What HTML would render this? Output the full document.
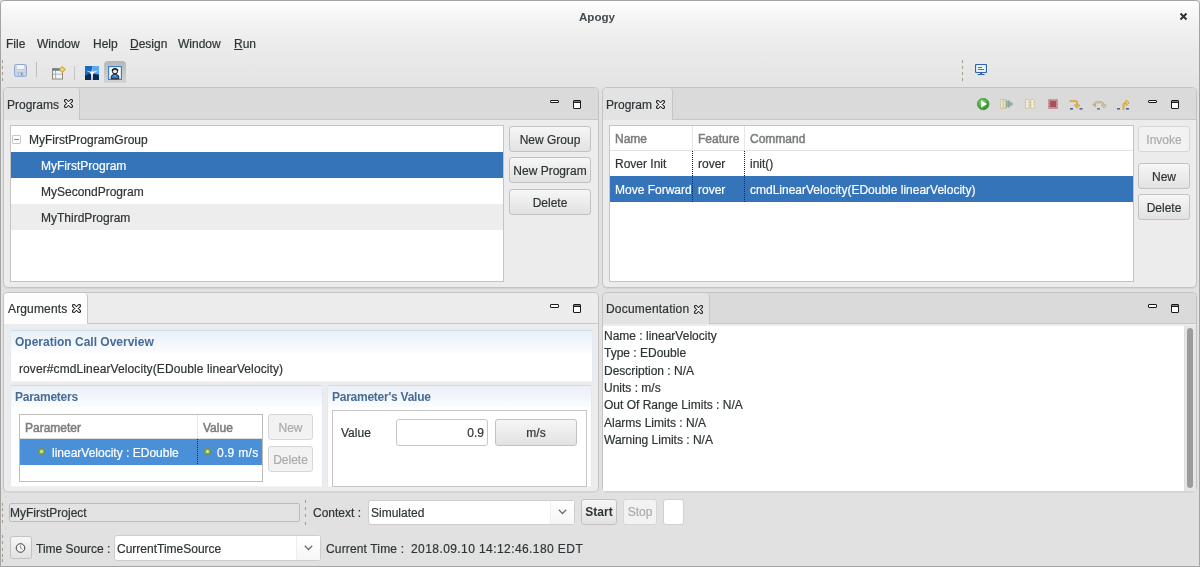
<!DOCTYPE html>
<html><head><meta charset="utf-8">
<style>
*{box-sizing:border-box;margin:0;padding:0}
html,body{width:1200px;height:567px;overflow:hidden;background:#e1e1e1}
body{-webkit-font-smoothing:antialiased;position:relative;font-family:"Liberation Sans",sans-serif;font-size:12px;color:#2e3436}
.a{position:absolute}
.t{position:absolute;white-space:pre;line-height:14px;font-size:12px;will-change:transform;-webkit-text-stroke:0.2px currentColor}
.b{font-weight:bold;-webkit-text-stroke:0}
.win{left:0;top:0;width:1200px;height:567px;border:1px solid #a4a4a4;border-radius:4px 4px 0 0;background:#e1e1e1}
.title{left:1px;top:1px;width:1198px;height:87px;background:linear-gradient(#fefefe 0,#f3f3f3 20px,#ebebeb 45px,#e4e4e4 86px);border-radius:4px 4px 0 0}
.panel{position:absolute;border:1px solid #c3c3c3;border-radius:5px;background:#ececec;overflow:hidden;box-shadow:0 1px 0 rgba(0,0,0,0.05)}
.strip{position:absolute;left:0;top:0;right:0;height:32px;background:#dadada;border-bottom:1px solid #c6c6c6}
.tab{position:absolute;left:0;top:0;height:32px;background:#e3e3e3;border-right:1px solid #c6c6c6;border-radius:4px 4px 0 0}
.tab.act{background:#fdfdfd}
.strip.act{background:#ececec}
.btn{position:absolute;border:1px solid #c2c2c2;border-radius:3px;background:linear-gradient(#f6f6f6,#e2e2e2);text-align:center;line-height:24px;padding-top:1px;color:#2e3436;will-change:transform;-webkit-text-stroke:0.2px currentColor;white-space:pre}
.btn.dis{background:#f2f2f2;border-color:#d6d6d6;color:#a9acac}
.box{position:absolute;background:#fff;border:1px solid #c4c4c4}
.sel{position:absolute;background:#3574b9}
.sel2{position:absolute;background:#4a90d9}
.w{color:#fff}
.hdr{color:#7b7e7e;-webkit-text-stroke:0.5px currentColor}
.sec{position:absolute;border:1px solid #e2e9f2;border-top-color:#cddbeb;border-bottom-color:#f0f3f7;background:#fff}
.sech{position:absolute;left:0;top:0;right:0;height:21px;background:linear-gradient(#eaf0f8,#fbfcfe)}
.blue{color:#456b97;font-weight:bold;-webkit-text-stroke:0}
</style></head><body>
<div class="a win"></div>
<div class="a title"></div>
<div class="t b" style="left:579px;top:10px;color:#444c4f;font-size:11.6px">Apogy</div>
<svg class="a" style="left:1179px;top:12px" width="9" height="9" viewBox="0 0 9 9"><path d="M1.5 1.5L7.5 7.5M7.5 1.5L1.5 7.5" stroke="#2e3436" stroke-width="2"/></svg>

<!-- menu -->
<div class="t" style="left:6px;top:37px">File</div>
<div class="t" style="left:37px;top:37px">Window</div>
<div class="t" style="left:93px;top:37px">Help</div>
<div class="t" style="left:130px;top:37px"><u>D</u>esign</div>
<div class="t" style="left:178px;top:37px">Window</div>
<div class="t" style="left:234px;top:37px"><u>R</u>un</div>

<!-- Programs panel -->
<div class="panel" style="left:3px;top:87px;width:596px;height:201px">
  <div class="strip"></div>
  <div class="tab" style="width:76px"></div>
</div>
<div class="t" style="left:7px;top:98px">Programs</div>

<!-- Program panel -->
<div class="panel" style="left:602px;top:87px;width:595px;height:201px">
  <div class="strip"></div>
  <div class="tab" style="width:70px"></div>
</div>
<div class="t" style="left:606px;top:98px">Program</div>

<!-- Arguments panel -->
<div class="panel" style="left:3px;top:292px;width:596px;height:200px;border-bottom-color:#d4d4d4">
  <div class="strip act" style="height:31px"></div>
  <div class="tab act" style="width:84px;height:31px"></div>
</div>
<div class="t" style="left:8px;top:302px;letter-spacing:0.15px">Arguments</div>

<!-- Documentation panel -->
<div class="panel" style="left:602px;top:292px;width:595px;height:200px;border-bottom-color:#d4d4d4">
  <div class="strip" style="height:31px"></div>
  <div class="tab" style="width:107px;height:31px"></div>
</div>
<div class="t" style="left:606px;top:302px;letter-spacing:0.2px">Documentation</div>

<!-- Programs content -->
<div class="box" style="left:10px;top:125px;width:494px;height:157px"></div>
<div class="a" style="left:11px;top:152px;width:492px;height:26px;background:#3574b9"></div>
<div class="a" style="left:11px;top:204px;width:492px;height:26px;background:#ededed"></div>
<div class="a" style="left:12px;top:135px;width:9px;height:9px;border:1px solid #c8c8c8;border-radius:1px"></div>
<div class="a" style="left:14px;top:139px;width:5px;height:1px;background:#8a8a8a"></div>
<div class="t" style="left:29px;top:133px">MyFirstProgramGroup</div>
<div class="t w" style="left:41px;top:159px">MyFirstProgram</div>
<div class="t" style="left:41px;top:185px">MySecondProgram</div>
<div class="t" style="left:41px;top:211px">MyThirdProgram</div>
<div class="btn" style="left:509px;top:126px;width:82px;height:26px">New Group</div>
<div class="btn" style="left:509px;top:157px;width:82px;height:26px">New Program</div>
<div class="btn" style="left:509px;top:189px;width:82px;height:26px">Delete</div>

<!-- Program content -->
<div class="box" style="left:609px;top:125px;width:525px;height:157px"></div>
<div class="a" style="left:610px;top:150px;width:523px;height:1px;background:#e2e2e2"></div>
<div class="a" style="left:692px;top:126px;width:1px;height:24px;background:#e6e6e6"></div>
<div class="a" style="left:744px;top:126px;width:1px;height:24px;background:#e6e6e6"></div>
<div class="a" style="left:610px;top:176px;width:523px;height:26px;background:#3574b9"></div>
<div class="a" style="left:692px;top:151px;width:1px;height:51px;background:repeating-linear-gradient(#222 0 1px,transparent 1px 2px)"></div>
<div class="a" style="left:744px;top:151px;width:1px;height:51px;background:repeating-linear-gradient(#222 0 1px,transparent 1px 2px)"></div>
<div class="t hdr" style="left:615px;top:132px">Name</div>
<div class="t hdr" style="left:698px;top:132px">Feature</div>
<div class="t hdr" style="left:750px;top:132px">Command</div>
<div class="t" style="left:615px;top:157px">Rover Init</div>
<div class="t" style="left:698px;top:157px">rover</div>
<div class="t" style="left:750px;top:157px">init()</div>
<div class="t w" style="left:615px;top:183px">Move Forward</div>
<div class="t w" style="left:698px;top:183px">rover</div>
<div class="t w" style="left:750px;top:183px">cmdLinearVelocity(EDouble linearVelocity)</div>
<div class="btn dis" style="left:1138px;top:126px;width:52px;height:26px">Invoke</div>
<div class="btn" style="left:1138px;top:163px;width:52px;height:26px">New</div>
<div class="btn" style="left:1138px;top:194px;width:52px;height:26px">Delete</div>

<!-- Arguments content -->
<div class="sec" style="left:10px;top:330px;width:583px;height:52px;border-radius:2px"><div class="sech" style="height:22px"></div></div>
<div class="t blue" style="left:15px;top:335px">Operation Call Overview</div>
<div class="t" style="left:19px;top:362px;letter-spacing:0.1px">rover#cmdLinearVelocity(EDouble linearVelocity)</div>
<div class="sec" style="left:10px;top:385px;width:313px;height:102px;border-radius:2px"><div class="sech"></div></div>
<div class="t blue" style="left:15px;top:390px;letter-spacing:-0.25px">Parameters</div>
<div class="sec" style="left:327px;top:385px;width:265px;height:102px;border-radius:2px"><div class="sech"></div></div>
<div class="t blue" style="left:332px;top:390px;letter-spacing:-0.25px">Parameter's Value</div>
<div class="box" style="left:19px;top:414px;width:244px;height:68px;border-color:#bdbdbd"></div>
<div class="a" style="left:20px;top:438px;width:242px;height:1px;background:#dedede"></div>
<div class="a" style="left:197px;top:415px;width:1px;height:23px;background:#e6e6e6"></div>
<div class="a" style="left:20px;top:439px;width:242px;height:26px;background:#4a90d9"></div>
<div class="a" style="left:197px;top:439px;width:1px;height:26px;background:repeating-linear-gradient(#222 0 1px,transparent 1px 2px)"></div>
<div class="t hdr" style="left:25px;top:421px">Parameter</div>
<div class="t hdr" style="left:203px;top:421px">Value</div>
<div class="t w" style="left:52px;top:446px">linearVelocity : EDouble</div>
<div class="t w" style="left:217px;top:446px;letter-spacing:0.3px">0.9 m/s</div>
<div class="btn dis" style="left:268px;top:414px;width:45px;height:26px">New</div>
<div class="btn dis" style="left:268px;top:446px;width:45px;height:26px">Delete</div>
<div class="box" style="left:332px;top:410px;width:255px;height:77px;border-color:#c6c6c6"></div>
<div class="t" style="left:341px;top:426px">Value</div>
<div class="a" style="left:396px;top:419px;width:92px;height:27px;background:#fff;border:1px solid #c6c6c6;border-radius:3px"></div>
<div class="t" style="left:396px;top:426px;width:88px;text-align:right">0.9</div>
<div class="btn" style="left:495px;top:419px;width:82px;height:27px;line-height:25px">m/s</div>

<!-- Documentation content -->
<div class="a" style="left:603px;top:326px;width:593px;height:165px;background:#fff"></div>
<div class="a" style="left:1184px;top:326px;width:12px;height:165px;background:#e6e6e6;border-left:1px solid #dedede"></div>
<div class="a" style="left:1187px;top:328px;width:6px;height:160px;background:#9b9b9b;border-radius:3px"></div>
<div class="t" style="left:604px;top:328px;line-height:17.35px">Name : linearVelocity
Type : EDouble
Description : N/A
Units : m/s
Out Of Range Limits : N/A
Alarms Limits : N/A
Warning Limits : N/A</div>

<!-- status bar -->
<div class="a" style="left:9px;top:503px;width:291px;height:19px;background:#e3e3e3;border:1px solid #bcbcbc;border-radius:2px"></div>
<div class="t" style="left:10px;top:506px">MyFirstProject</div>
<div class="t" style="left:313px;top:506px">Context :</div>
<div class="a" style="left:368px;top:500px;width:207px;height:25px;background:#fff;border:1px solid #cdcdcd;border-radius:3px"></div>
<div class="a" style="left:550px;top:501px;width:24px;height:23px;background:linear-gradient(#fff,#f6f6f6);border-left:1px solid #eeeeee"></div>
<div class="t" style="left:371px;top:506px">Simulated</div>
<div class="btn" style="left:581px;top:499px;width:36px;height:26px;line-height:23px;font-weight:bold;-webkit-text-stroke:0">Start</div>
<div class="btn dis" style="left:623px;top:499px;width:34px;height:26px;line-height:23px">Stop</div>
<div class="a" style="left:663px;top:499px;width:21px;height:26px;background:#fff;border:1px solid #d0d0d0;border-radius:3px"></div>
<div class="btn" style="left:10px;top:536px;width:22px;height:23px"></div>
<div class="t" style="left:36px;top:542px">Time Source :</div>
<div class="a" style="left:114px;top:535px;width:207px;height:26px;background:#fff;border:1px solid #cdcdcd;border-radius:3px"></div>
<div class="a" style="left:296px;top:536px;width:24px;height:24px;background:linear-gradient(#fff,#f6f6f6);border-left:1px solid #eeeeee"></div>
<div class="t" style="left:117px;top:542px">CurrentTimeSource</div>
<div class="t" style="left:326px;top:542px;letter-spacing:0.15px">Current Time :</div>
<div class="t" style="left:411px;top:542px;letter-spacing:0.42px">2018.09.10 14:12:46.180 EDT</div>

<!-- icons -->
<div class="a" style="left:2px;top:60px;width:1px;height:3px;background:#a59d88"></div><div class="a" style="left:2px;top:66px;width:1px;height:3px;background:#a59d88"></div><div class="a" style="left:2px;top:72px;width:1px;height:3px;background:#a59d88"></div><div class="a" style="left:2px;top:78px;width:1px;height:3px;background:#a59d88"></div><div class="a" style="left:962px;top:60px;width:1px;height:3px;background:#a59d88"></div><div class="a" style="left:962px;top:66px;width:1px;height:3px;background:#a59d88"></div><div class="a" style="left:962px;top:72px;width:1px;height:3px;background:#a59d88"></div><div class="a" style="left:962px;top:78px;width:1px;height:3px;background:#a59d88"></div><div class="a" style="left:2px;top:503px;width:1px;height:3px;background:#a59d88"></div><div class="a" style="left:2px;top:508px;width:1px;height:3px;background:#a59d88"></div><div class="a" style="left:2px;top:514px;width:1px;height:3px;background:#a59d88"></div><div class="a" style="left:2px;top:520px;width:1px;height:3px;background:#a59d88"></div><div class="a" style="left:2px;top:535px;width:1px;height:3px;background:#a59d88"></div><div class="a" style="left:2px;top:541px;width:1px;height:3px;background:#a59d88"></div><div class="a" style="left:2px;top:548px;width:1px;height:3px;background:#a59d88"></div><div class="a" style="left:2px;top:554px;width:1px;height:3px;background:#a59d88"></div><div class="a" style="left:2px;top:559px;width:1px;height:3px;background:#a59d88"></div><div class="a" style="left:305px;top:500px;width:1px;height:3px;background:#a59d88"></div><div class="a" style="left:305px;top:507px;width:1px;height:3px;background:#a59d88"></div><div class="a" style="left:305px;top:514px;width:1px;height:3px;background:#a59d88"></div><div class="a" style="left:305px;top:522px;width:1px;height:3px;background:#a59d88"></div>
<svg class="a" style="left:64px;top:99px" width="9" height="9" viewBox="0 0 9 9"><path d="M1.7 1.7L7.3 7.3M7.3 1.7L1.7 7.3" stroke="#262626" stroke-width="3.6" stroke-linecap="round"/><path d="M1.9 1.9L7.1 7.1M7.1 1.9L1.9 7.1" stroke="#fff" stroke-width="1.5" stroke-linecap="round"/></svg><svg class="a" style="left:656px;top:100px" width="9" height="9" viewBox="0 0 9 9"><path d="M1.7 1.7L7.3 7.3M7.3 1.7L1.7 7.3" stroke="#262626" stroke-width="3.6" stroke-linecap="round"/><path d="M1.9 1.9L7.1 7.1M7.1 1.9L1.9 7.1" stroke="#fff" stroke-width="1.5" stroke-linecap="round"/></svg><svg class="a" style="left:72px;top:304px" width="9" height="9" viewBox="0 0 9 9"><path d="M1.7 1.7L7.3 7.3M7.3 1.7L1.7 7.3" stroke="#262626" stroke-width="3.6" stroke-linecap="round"/><path d="M1.9 1.9L7.1 7.1M7.1 1.9L1.9 7.1" stroke="#fff" stroke-width="1.5" stroke-linecap="round"/></svg><svg class="a" style="left:694px;top:305px" width="9" height="9" viewBox="0 0 9 9"><path d="M1.7 1.7L7.3 7.3M7.3 1.7L1.7 7.3" stroke="#262626" stroke-width="3.6" stroke-linecap="round"/><path d="M1.9 1.9L7.1 7.1M7.1 1.9L1.9 7.1" stroke="#fff" stroke-width="1.5" stroke-linecap="round"/></svg>
<div class="a" style="left:550px;top:100px;width:9px;height:3px;border:1px solid #1a1a1a;border-radius:1px;background:#fff"></div><div class="a" style="left:573px;top:100px;width:8px;height:9px;border:1px solid #1a1a1a;border-radius:1px;background:linear-gradient(#666 0,#999 1px,#222 1px,#222 2px,#fff 2px)"></div><div class="a" style="left:1148px;top:100px;width:9px;height:3px;border:1px solid #1a1a1a;border-radius:1px;background:#fff"></div><div class="a" style="left:1171px;top:100px;width:8px;height:9px;border:1px solid #1a1a1a;border-radius:1px;background:linear-gradient(#666 0,#999 1px,#222 1px,#222 2px,#fff 2px)"></div><div class="a" style="left:550px;top:304px;width:9px;height:4px;border:1px solid #1a1a1a;border-radius:1px;background:#fff"></div><div class="a" style="left:573px;top:304px;width:8px;height:9px;border:1px solid #1a1a1a;border-radius:1px;background:linear-gradient(#666 0,#999 1px,#222 1px,#222 2px,#fff 2px)"></div><div class="a" style="left:1148px;top:304px;width:9px;height:4px;border:1px solid #1a1a1a;border-radius:1px;background:#fff"></div><div class="a" style="left:1171px;top:304px;width:8px;height:9px;border:1px solid #1a1a1a;border-radius:1px;background:linear-gradient(#666 0,#999 1px,#222 1px,#222 2px,#fff 2px)"></div>

<svg class="a" style="left:14px;top:64px" width="13" height="13" viewBox="0 0 13 13">
<rect x="0.5" y="0.5" width="12" height="12" rx="1.8" fill="#c9d6ea" stroke="#8ea6cd"/>
<rect x="3" y="1" width="7" height="5.5" fill="#f2f5fa"/><rect x="3" y="5.2" width="7" height="1" fill="#d7b97a"/>
<rect x="3.5" y="8" width="6" height="4.5" fill="#a9bedb"/><rect x="5" y="9" width="1.5" height="2.5" fill="#e4e0c8"/><rect x="7" y="9" width="1" height="2.5" fill="#7f9a74"/>
</svg>
<div class="a" style="left:36px;top:62px;width:1px;height:15px;background:#bdbdbd"></div>
<div class="a" style="left:74px;top:66px;width:1px;height:14px;background:#c4c4c4"></div>
<svg class="a" style="left:52px;top:66px" width="14" height="14" viewBox="0 0 14 14">
<rect x="0.5" y="2.5" width="10" height="10.5" fill="#eef5fb" stroke="#8c8a74"/>
<rect x="1" y="3" width="9" height="1.8" fill="#4f82c6"/>
<path d="M1 8.2h9M3.5 5v7.5" stroke="#a9a58c" stroke-width="0.8"/>
<path d="M10.3 0.3l3.2 3.2-3.2 3.2-3.2-3.2z" fill="#e2bd55" stroke="#c59a35" stroke-width="0.7"/><path d="M10.3 2l1.3 1.5-1.3 1.3-1.2-1.3z" fill="#f6e6a8"/>
</svg>
<svg class="a" style="left:85px;top:66px" width="14" height="14" viewBox="0 0 14 14">
<rect width="14" height="14" fill="#1b6ac0"/><rect x="7" y="0" width="7" height="8" fill="#5eaaec"/>
<path d="M0 14V9.5L7 6.8 14 9.5V14z" fill="#072a58"/>
<path d="M7 7.6L0.8 4.4 7 6.0 13.2 4.4 7.9 7.6 7.7 14 6.3 14 6.1 7.6z" fill="#fff"/>
<path d="M7 2.5L7.6 7 7 8.5 6.4 7z" fill="#fff"/>
<circle cx="7" cy="7" r="1.6" fill="#fff"/>
</svg>
<div class="a" style="left:104px;top:61px;width:22px;height:22px;background:linear-gradient(#b4b8b4,#c8cac8 60%,#d4d4d4);border-radius:4px 4px 0 0"></div>
<svg class="a" style="left:108px;top:66px" width="14" height="14" viewBox="0 0 14 14">
<rect x="0.6" y="0.6" width="12.8" height="12.8" fill="#fff" stroke="#3a82cf" stroke-width="1.2"/>
<path d="M3.2 12.8V11c0-1.8 1.7-2.8 3.8-2.8s3.8 1 3.8 2.8v1.8z" fill="#2f78c8" stroke="#111" stroke-width="0.9"/>
<circle cx="7" cy="5.3" r="2.6" fill="#e6e6e6" stroke="#111" stroke-width="1"/>
<path d="M4.3 5C4.3 2.2 9.7 2.2 9.7 5" fill="none" stroke="#111" stroke-width="1.4"/>
<path d="M6.4 9.2h1.2L7 11.3z" fill="#cfe0f2"/>
</svg>
<svg class="a" style="left:975px;top:64px" width="12" height="11" viewBox="0 0 12 11">
<rect x="0.5" y="0.5" width="11" height="8" rx="1" fill="#e8f2fc" stroke="#2f63b0" stroke-width="1.2"/>
<path d="M3 3.5h4M3 5.5h6" stroke="#2f63b0" stroke-width="0.9"/>
<rect x="5" y="9" width="2" height="1" fill="#2f63b0"/><rect x="2.5" y="10" width="7" height="1" fill="#2f63b0"/>
</svg>
<svg class="a" style="left:977px;top:98px" width="13" height="13" viewBox="0 0 13 13">
<defs><radialGradient id="gp" cx="0.4" cy="0.35" r="0.7"><stop offset="0" stop-color="#8fd36f"/><stop offset="1" stop-color="#1f8a2a"/></radialGradient></defs>
<circle cx="6.2" cy="6" r="5.8" fill="url(#gp)" stroke="#2a8a30" stroke-width="0.6"/>
<path d="M4.2 2.2L10 6 4.2 9.8z" fill="#fff"/>
</svg>
<svg class="a" style="left:1000px;top:99px" width="14" height="10" viewBox="0 0 14 10">
<rect x="0.5" y="0.5" width="2.5" height="9" fill="#eee7cf" stroke="#c9b98c" stroke-dasharray="1 0.6"/>
<rect x="3.8" y="0.5" width="2.5" height="9" fill="#eee7cf" stroke="#c9b98c" stroke-dasharray="1 0.6"/>
<path d="M6 1l4 4-4 4zM8.5 1.5l4.5 3.5-4.5 3.5z" fill="#9fb6a6" stroke="#7f9d8a" stroke-width="0.6"/>
</svg>
<svg class="a" style="left:1025px;top:99px" width="10" height="10" viewBox="0 0 10 10">
<rect x="0.5" y="0.5" width="3.5" height="9" rx="0.8" fill="#f1ead4" stroke="#c6b587" stroke-dasharray="1 0.6"/>
<rect x="5.8" y="0.5" width="3.5" height="9" rx="0.8" fill="#f1ead4" stroke="#c6b587" stroke-dasharray="1 0.6"/>
</svg>
<svg class="a" style="left:1048px;top:99px" width="10" height="10" viewBox="0 0 10 10">
<rect x="0.5" y="0.5" width="9" height="9" fill="#c98a92" stroke="#c58a92" stroke-dasharray="1 0.5"/><rect x="2" y="2" width="6" height="6" fill="#a8505e"/>
</svg>
<svg class="a" style="left:1069px;top:99px" width="15" height="11" viewBox="0 0 15 11">
<path d="M1.5 2h4.5c1.5 0 2 1 2 2v2" fill="none" stroke="#dcae4c" stroke-width="2.2" stroke-linecap="round"/>
<path d="M5 6h6l-3 3.2z" fill="#e9be4f" stroke="#c9952e" stroke-width="0.6"/>
<rect x="1" y="9" width="3" height="1.6" fill="#4c6a94"/><rect x="10.5" y="9" width="3" height="1.6" fill="#4c6a94"/>
</svg>
<svg class="a" style="left:1092px;top:99px" width="15" height="11" viewBox="0 0 15 11">
<path d="M2 7C2 2 12 2 12 7" fill="none" stroke="#b9ad8c" stroke-width="2.4"/><path d="M2 7C2 2.8 12 2.8 12 7" fill="none" stroke="#e4dcc4" stroke-width="0.9"/>
<path d="M1 5.5h2.5v2.5zM9.5 6h5l-2.5 3z" fill="#d8cfb4" stroke="#b0a27e" stroke-width="0.7"/>
<rect x="5" y="9" width="3" height="1.6" fill="#6b7f99"/>
</svg>
<svg class="a" style="left:1116px;top:99px" width="15" height="11" viewBox="0 0 15 11">
<path d="M7.5 10V6.2c0-1.2.8-2.2 2-2.2h1" fill="none" stroke="#dcae4c" stroke-width="2.2" stroke-linecap="round"/>
<path d="M10 1l3.3 2.8L10 6.6z" fill="#f2d47a" stroke="#c9952e" stroke-width="0.7"/>
<rect x="1" y="9" width="3" height="1.6" fill="#4c6a94"/><rect x="10" y="9" width="3" height="1.6" fill="#4c6a94"/>
</svg>
<svg class="a" style="left:37px;top:447px" width="9" height="9" viewBox="0 0 9 9"><path d="M4.5 0L6.2 2.2 9 4.5 6.2 6.8 4.5 9 2.8 6.8 0 4.5 2.8 2.2z" fill="#7a8f2e"/><circle cx="4.5" cy="4.5" r="2.6" fill="#8fb040"/><circle cx="4.5" cy="4.5" r="1.3" fill="#e4efc8"/></svg><svg class="a" style="left:203px;top:447px" width="9" height="9" viewBox="0 0 9 9"><path d="M4.5 0L6.2 2.2 9 4.5 6.2 6.8 4.5 9 2.8 6.8 0 4.5 2.8 2.2z" fill="#7a8f2e"/><circle cx="4.5" cy="4.5" r="2.6" fill="#8fb040"/><circle cx="4.5" cy="4.5" r="1.3" fill="#e4efc8"/></svg>
<svg class="a" style="left:15px;top:542px" width="11" height="12" viewBox="0 0 11 12"><circle cx="5.5" cy="6" r="4.3" fill="#f4f4f4" stroke="#3a3a3a" stroke-width="1"/><path d="M5.5 3.3V6l2 1.3" fill="none" stroke="#777" stroke-width="0.8"/></svg>
<svg class="a" style="left:558px;top:509px" width="9" height="6" viewBox="0 0 9 6"><path d="M0.8 0.8L4.5 4.5 8.2 0.8" fill="none" stroke="#6d6d6d" stroke-width="1.3"/></svg><svg class="a" style="left:304px;top:545px" width="9" height="6" viewBox="0 0 9 6"><path d="M0.8 0.8L4.5 4.5 8.2 0.8" fill="none" stroke="#6d6d6d" stroke-width="1.3"/></svg>

</body></html>
